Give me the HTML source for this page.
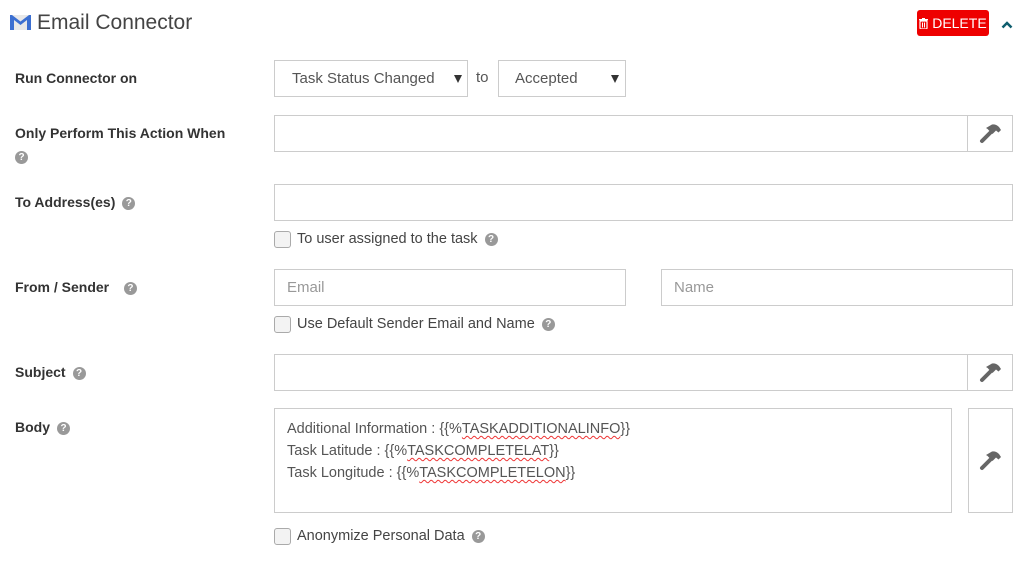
<!DOCTYPE html>
<html><head><meta charset="utf-8"><style>
body{margin:0;width:1024px;height:569px;background:#fff;font-family:"Liberation Sans",sans-serif;position:relative;overflow:hidden;color:#333}
.a{position:absolute}
.lbl{position:absolute;left:15px;font-weight:bold;font-size:14px;color:#333;line-height:16px}
.box{position:absolute;border:1px solid #ccc;box-sizing:border-box;background:#fff}
.ph{position:absolute;font-size:15px;color:#999}
.q{display:inline-block;width:13px;height:13px;border-radius:50%;background:#999;color:#fff;font-size:10px;line-height:13px;text-align:center;font-weight:bold;vertical-align:middle;margin-left:7px}
.cb{position:absolute;width:17px;height:17px;border:1px solid #aaa;border-radius:3px;background:#f3f3f3;box-sizing:border-box;left:274px}
.ct{position:absolute;left:297px;font-size:14.5px;color:#444}
.txt{font-size:15px;color:#555}
.sq{text-decoration:underline wavy #e33;text-decoration-thickness:1px;text-underline-offset:2px}
.arr{position:absolute;width:0;height:0;border-left:4px solid transparent;border-right:4px solid transparent;border-top:8px solid #333;top:14px}
</style></head><body>
<svg class="a" style="left:10px;top:15px" width="21" height="15" viewBox="0 0 21 15"><rect width="21" height="15" fill="#e8e8e8"/><path d="M0 0v15h4V5l6.5 5L17 5v10h4V0h-2l-8.5 6.5L2 0z" fill="#3b6fd1"/></svg>
<div class="a" style="left:37px;top:11px;font-size:21px;color:#444">Email Connector</div>
<div class="a" style="left:917px;top:10px;width:72px;height:26px;background:#e00;border-radius:3px;color:#fff;font-size:14px;line-height:26px;text-align:center">
<svg width="9" height="11" viewBox="0 0 9 11" style="vertical-align:-1px"><rect x="0" y="1" width="9" height="1.5" fill="#fff"/><rect x="3" y="0" width="3" height="1.5" fill="#fff"/><rect x="1" y="3" width="7" height="8" rx="1" fill="none" stroke="#fff" stroke-width="1.2"/><path d="M3.5 4.5v5M5.5 4.5v5" stroke="#fff"/></svg> DELETE</div>
<svg class="a" style="left:1001px;top:20px" width="12" height="9" viewBox="0 0 12 9"><path d="M1.5 7.5L6 3l4.5 4.5" stroke="#0f5e6e" stroke-width="2.5" fill="none"/></svg>

<div class="lbl" style="top:70px">Run Connector on</div>
<div class="box" style="left:274px;top:60px;width:194px;height:37px"><span class="a txt" style="left:17px;top:9px">Task Status Changed</span><span class="arr" style="left:179px"></span></div>
<div class="a txt" style="left:476px;top:69px">to</div>
<div class="box" style="left:498px;top:60px;width:128px;height:37px"><span class="a txt" style="left:16px;top:9px">Accepted</span><span class="arr" style="left:112px"></span></div>

<div class="lbl" style="top:125px">Only Perform This Action When</div>
<div class="a" style="left:8px;top:149px"><span class="q">?</span></div>
<div class="box" style="left:274px;top:115px;width:694px;height:37px"></div>
<div class="box" style="left:967px;top:115px;width:46px;height:37px"></div>

<div class="lbl" style="top:194px">To Address(es)<span class="q">?</span></div>
<div class="box" style="left:274px;top:184px;width:739px;height:37px"></div>
<div class="cb" style="top:231px"></div><div class="ct" style="top:231px">To user assigned to the task<span class="q">?</span></div>

<div class="lbl" style="top:279px">From / Sender &nbsp;<span class="q">?</span></div>
<div class="box" style="left:274px;top:269px;width:352px;height:37px"><span class="ph" style="left:12px;top:9px">Email</span></div>
<div class="box" style="left:661px;top:269px;width:352px;height:37px"><span class="ph" style="left:12px;top:9px">Name</span></div>
<div class="cb" style="top:316px"></div><div class="ct" style="top:316px">Use Default Sender Email and Name<span class="q">?</span></div>

<div class="lbl" style="top:364px">Subject<span class="q">?</span></div>
<div class="box" style="left:274px;top:354px;width:694px;height:37px"></div>
<div class="box" style="left:967px;top:354px;width:46px;height:37px"></div>

<div class="lbl" style="top:419px">Body<span class="q">?</span></div>
<div class="box" style="left:274px;top:408px;width:678px;height:105px"><div class="a txt" style="left:12px;top:9px;line-height:22px;font-size:14.5px">Additional Information : {{%<span class="sq">TASKADDITIONALINFO</span>}}<br>Task Latitude : {{%<span class="sq">TASKCOMPLETELAT</span>}}<br>Task Longitude : {{%<span class="sq">TASKCOMPLETELON</span>}}</div></div>
<div class="box" style="left:968px;top:408px;width:45px;height:105px"></div>
<div class="cb" style="top:528px"></div><div class="ct" style="top:528px">Anonymize Personal Data<span class="q">?</span></div>

<svg class="a" style="left:978px;top:122px" width="24" height="22" viewBox="0 0 24 22"><path d="M4 19L13 10" stroke="#666" stroke-width="4" stroke-linecap="round"/><path d="M8 6L14 2.5Q18 2 21 5L23 8L20.5 10.5L18 8.5L14.5 12L10.5 8Q10 7 8 6z" fill="#666"/></svg>
<svg class="a" style="left:978px;top:361px" width="24" height="22" viewBox="0 0 24 22"><path d="M4 19L13 10" stroke="#666" stroke-width="4" stroke-linecap="round"/><path d="M8 6L14 2.5Q18 2 21 5L23 8L20.5 10.5L18 8.5L14.5 12L10.5 8Q10 7 8 6z" fill="#666"/></svg>
<svg class="a" style="left:978px;top:449px" width="24" height="22" viewBox="0 0 24 22"><path d="M4 19L13 10" stroke="#666" stroke-width="4" stroke-linecap="round"/><path d="M8 6L14 2.5Q18 2 21 5L23 8L20.5 10.5L18 8.5L14.5 12L10.5 8Q10 7 8 6z" fill="#666"/></svg>
</body></html>
